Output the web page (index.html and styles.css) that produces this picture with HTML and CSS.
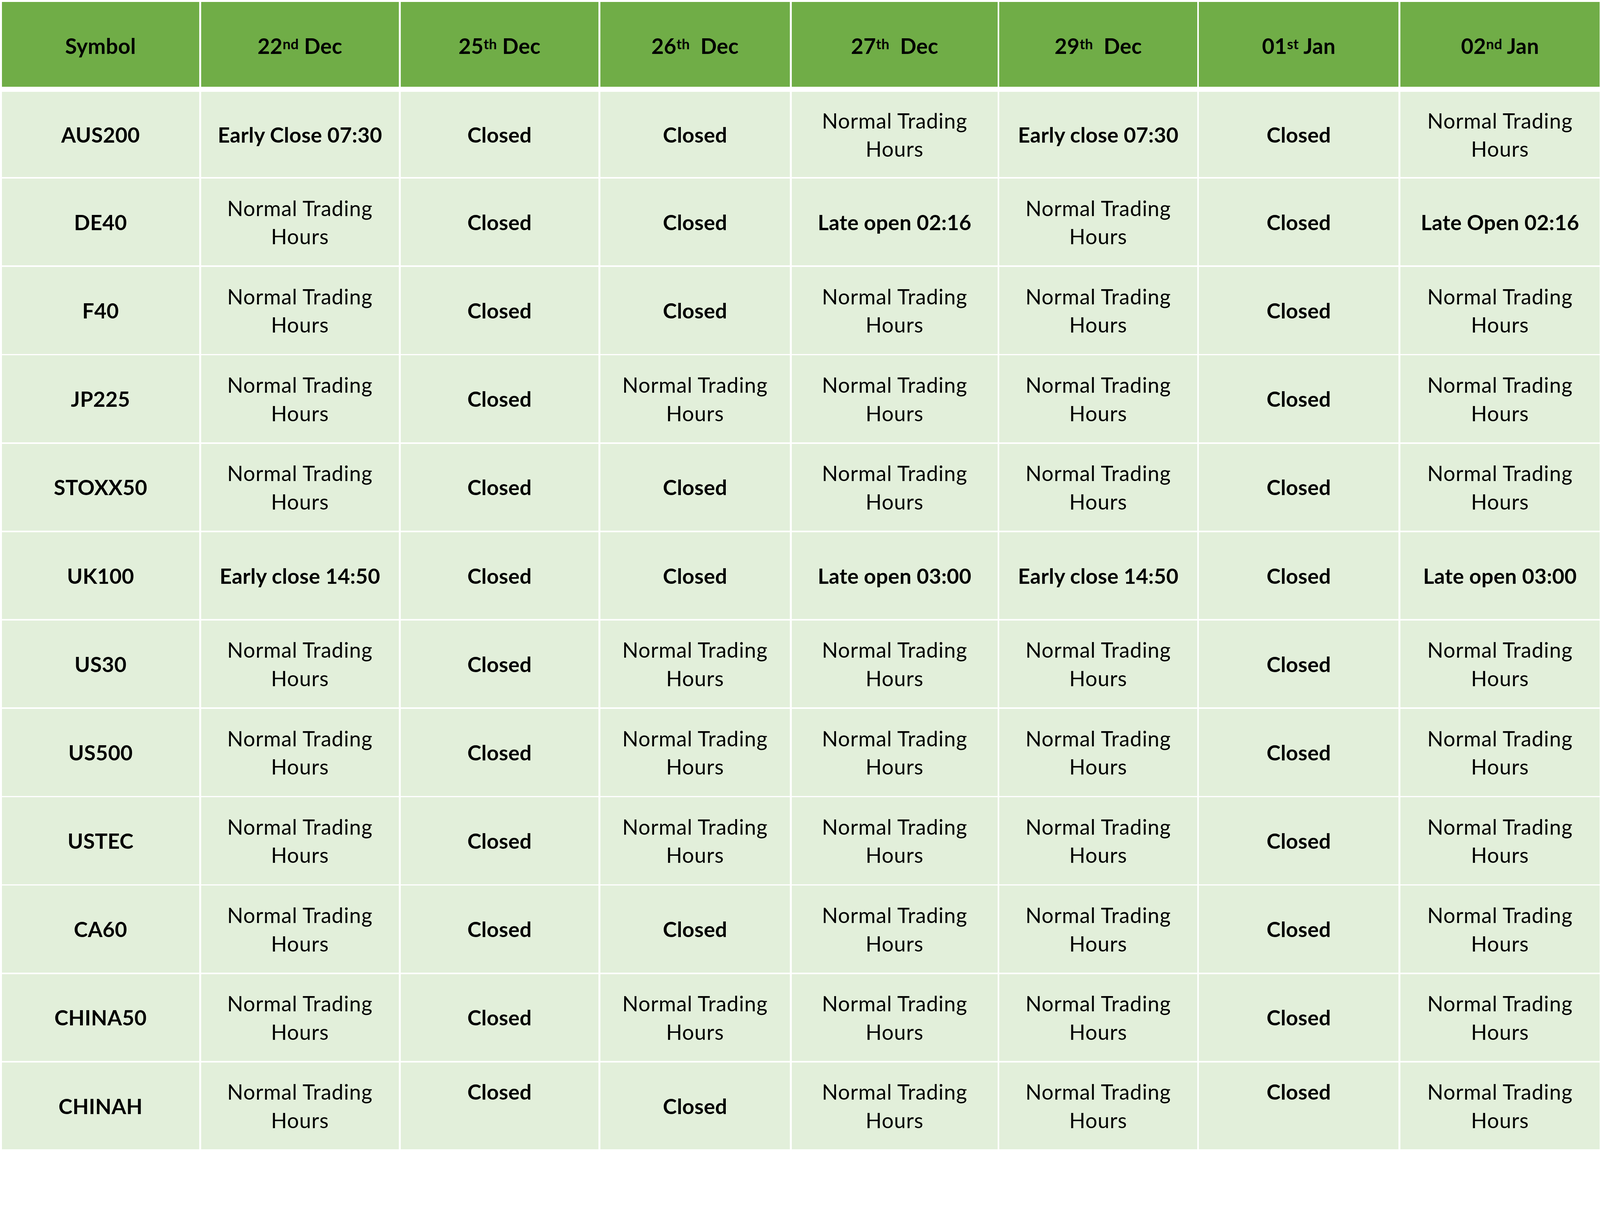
FILE: index.html
```html
<!DOCTYPE html>
<html lang="en">
<head>
<meta charset="utf-8">
<title>Holiday Trading Hours</title>
<link rel="stylesheet" href="styles.css">
</head>
<body>
<div class="sheet">
  <div class="cell head"><span>Symbol</span></div>
  <div class="cell head"><span>22<sup>nd</sup> Dec</span></div>
  <div class="cell head"><span>25<sup>th</sup> Dec</span></div>
  <div class="cell head"><span>26<sup>th</sup>&nbsp; Dec</span></div>
  <div class="cell head"><span>27<sup>th</sup>&nbsp; Dec</span></div>
  <div class="cell head"><span>29<sup>th</sup>&nbsp; Dec</span></div>
  <div class="cell head"><span>01<sup>st</sup> Jan</span></div>
  <div class="cell head"><span>02<sup>nd</sup> Jan</span></div>

  <div class="cell b"><span>AUS200</span></div>
  <div class="cell b"><span>Early Close 07:30</span></div>
  <div class="cell b"><span>Closed</span></div>
  <div class="cell b"><span>Closed</span></div>
  <div class="cell"><span>Normal Trading<br>Hours</span></div>
  <div class="cell b"><span>Early close 07:30</span></div>
  <div class="cell b"><span>Closed</span></div>
  <div class="cell"><span>Normal Trading<br>Hours</span></div>

  <div class="cell b"><span>DE40</span></div>
  <div class="cell"><span>Normal Trading<br>Hours</span></div>
  <div class="cell b"><span>Closed</span></div>
  <div class="cell b"><span>Closed</span></div>
  <div class="cell b"><span>Late open 02:16</span></div>
  <div class="cell"><span>Normal Trading<br>Hours</span></div>
  <div class="cell b"><span>Closed</span></div>
  <div class="cell b"><span>Late Open 02:16</span></div>

  <div class="cell b"><span>F40</span></div>
  <div class="cell"><span>Normal Trading<br>Hours</span></div>
  <div class="cell b"><span>Closed</span></div>
  <div class="cell b"><span>Closed</span></div>
  <div class="cell"><span>Normal Trading<br>Hours</span></div>
  <div class="cell"><span>Normal Trading<br>Hours</span></div>
  <div class="cell b"><span>Closed</span></div>
  <div class="cell"><span>Normal Trading<br>Hours</span></div>

  <div class="cell b"><span>JP225</span></div>
  <div class="cell"><span>Normal Trading<br>Hours</span></div>
  <div class="cell b"><span>Closed</span></div>
  <div class="cell"><span>Normal Trading<br>Hours</span></div>
  <div class="cell"><span>Normal Trading<br>Hours</span></div>
  <div class="cell"><span>Normal Trading<br>Hours</span></div>
  <div class="cell b"><span>Closed</span></div>
  <div class="cell"><span>Normal Trading<br>Hours</span></div>

  <div class="cell b"><span>STOXX50</span></div>
  <div class="cell"><span>Normal Trading<br>Hours</span></div>
  <div class="cell b"><span>Closed</span></div>
  <div class="cell b"><span>Closed</span></div>
  <div class="cell"><span>Normal Trading<br>Hours</span></div>
  <div class="cell"><span>Normal Trading<br>Hours</span></div>
  <div class="cell b"><span>Closed</span></div>
  <div class="cell"><span>Normal Trading<br>Hours</span></div>

  <div class="cell b"><span>UK100</span></div>
  <div class="cell b"><span>Early close 14:50</span></div>
  <div class="cell b"><span>Closed</span></div>
  <div class="cell b"><span>Closed</span></div>
  <div class="cell b"><span>Late open 03:00</span></div>
  <div class="cell b"><span>Early close 14:50</span></div>
  <div class="cell b"><span>Closed</span></div>
  <div class="cell b"><span>Late open 03:00</span></div>

  <div class="cell b"><span>US30</span></div>
  <div class="cell"><span>Normal Trading<br>Hours</span></div>
  <div class="cell b"><span>Closed</span></div>
  <div class="cell"><span>Normal Trading<br>Hours</span></div>
  <div class="cell"><span>Normal Trading<br>Hours</span></div>
  <div class="cell"><span>Normal Trading<br>Hours</span></div>
  <div class="cell b"><span>Closed</span></div>
  <div class="cell"><span>Normal Trading<br>Hours</span></div>

  <div class="cell b"><span>US500</span></div>
  <div class="cell"><span>Normal Trading<br>Hours</span></div>
  <div class="cell b"><span>Closed</span></div>
  <div class="cell"><span>Normal Trading<br>Hours</span></div>
  <div class="cell"><span>Normal Trading<br>Hours</span></div>
  <div class="cell"><span>Normal Trading<br>Hours</span></div>
  <div class="cell b"><span>Closed</span></div>
  <div class="cell"><span>Normal Trading<br>Hours</span></div>

  <div class="cell b"><span>USTEC</span></div>
  <div class="cell"><span>Normal Trading<br>Hours</span></div>
  <div class="cell b"><span>Closed</span></div>
  <div class="cell"><span>Normal Trading<br>Hours</span></div>
  <div class="cell"><span>Normal Trading<br>Hours</span></div>
  <div class="cell"><span>Normal Trading<br>Hours</span></div>
  <div class="cell b"><span>Closed</span></div>
  <div class="cell"><span>Normal Trading<br>Hours</span></div>

  <div class="cell b"><span>CA60</span></div>
  <div class="cell"><span>Normal Trading<br>Hours</span></div>
  <div class="cell b"><span>Closed</span></div>
  <div class="cell b"><span>Closed</span></div>
  <div class="cell"><span>Normal Trading<br>Hours</span></div>
  <div class="cell"><span>Normal Trading<br>Hours</span></div>
  <div class="cell b"><span>Closed</span></div>
  <div class="cell"><span>Normal Trading<br>Hours</span></div>

  <div class="cell b"><span>CHINA50</span></div>
  <div class="cell"><span>Normal Trading<br>Hours</span></div>
  <div class="cell b"><span>Closed</span></div>
  <div class="cell"><span>Normal Trading<br>Hours</span></div>
  <div class="cell"><span>Normal Trading<br>Hours</span></div>
  <div class="cell"><span>Normal Trading<br>Hours</span></div>
  <div class="cell b"><span>Closed</span></div>
  <div class="cell"><span>Normal Trading<br>Hours</span></div>

  <div class="cell b"><span>CHINAH</span></div>
  <div class="cell"><span>Normal Trading<br>Hours</span></div>
  <div class="cell b"><span>Closed<br>&nbsp;</span></div>
  <div class="cell b"><span>Closed</span></div>
  <div class="cell"><span>Normal Trading<br>Hours</span></div>
  <div class="cell"><span>Normal Trading<br>Hours</span></div>
  <div class="cell b"><span>Closed<br>&nbsp;</span></div>
  <div class="cell"><span>Normal Trading<br>Hours</span></div>
</div>
</body>
</html>
```
FILE: styles.css
```css
:root {
  /* one unit = one pixel of the 4337px-wide design */
  --u: calc(100vw / 4337);
}

html, body {
  margin: 0;
  padding: 0;
  background: #ffffff;
}

body {
  font-family: Lato, "Liberation Sans", sans-serif;
  color: #000000;
}

.sheet {
  display: grid;
  grid-template-columns:
    calc(535 * var(--u)) calc(536 * var(--u)) calc(536 * var(--u)) calc(514 * var(--u))
    calc(558 * var(--u)) calc(536 * var(--u)) calc(541 * var(--u)) calc(540 * var(--u));
  grid-template-rows: calc(240 * var(--u)) calc(231 * var(--u)) repeat(11, calc(235.5 * var(--u)));
  column-gap: calc(5 * var(--u));
  row-gap: calc(4 * var(--u));
  padding: calc(5 * var(--u)) 0 0 calc(5 * var(--u));
}

.cell {
  background: #e2efda;
  display: flex;
  align-items: center;
  justify-content: center;
  text-align: center;
  font-size: calc(57 * var(--u));
  line-height: calc(77 * var(--u));
  letter-spacing: calc(1 * var(--u));
  font-weight: 400;
  white-space: nowrap;
}

.cell.b {
  font-weight: 700;
  letter-spacing: calc(0.3 * var(--u));
}

.cell.head {
  background: #70ad47;
  font-weight: 700;
  font-size: calc(58 * var(--u));
  letter-spacing: calc(0.3 * var(--u));
  margin-bottom: calc(10 * var(--u));
  padding-top: calc(8 * var(--u));
}

.cell.head sup {
  font-size: 0.66em;
  line-height: 0;
  vertical-align: 0.34em;
}
```
